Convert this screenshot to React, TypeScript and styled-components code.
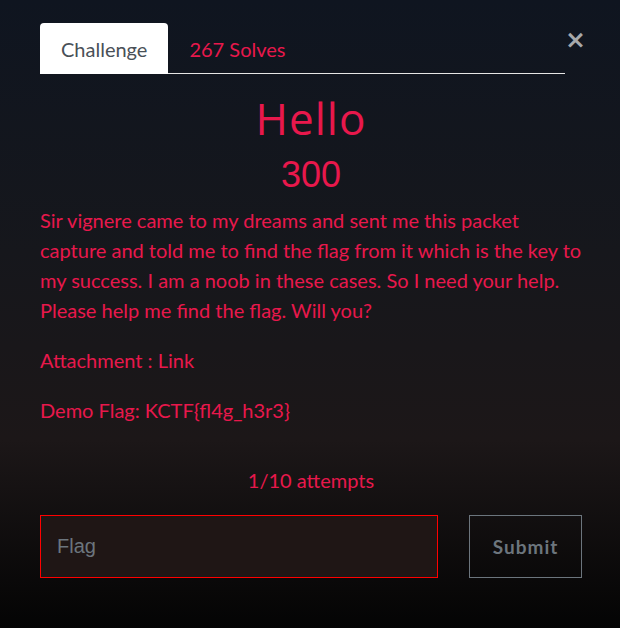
import React from "react";
import styled, { createGlobalStyle } from "styled-components";

const accent = "#e8184c";

const GlobalStyle = createGlobalStyle`
	html, body {
		margin: 0;
		padding: 0;
	}
	body {
		min-height: 628px;
		background: linear-gradient(to bottom, #0f1520 0%, #16171c 40%, #1c1718 70%, #040404 100%);
		font-family: Lato, "Open Sans", sans-serif;
	}
`;

const Modal = styled.div`
	width: 620px;
	min-height: 628px;
	box-sizing: border-box;
	padding: 23px 38px 0 40px;
`;

const Header = styled.div`
	display: flex;
	align-items: flex-start;
`;

const Tabs = styled.nav`
	flex: 1;
	display: flex;
	border-bottom: 1px solid #e6e6e6;
`;

const Tab = styled.div<{ $active?: boolean }>`
	height: 51px;
	display: flex;
	align-items: center;
	padding: 0 21px;
	font-size: 20px;
	border-radius: 4px 4px 0 0;
	color: ${(p) => (p.$active ? "#495057" : accent)};
	background: ${(p) => (p.$active ? "#ffffff" : "transparent")};
	margin-bottom: -1px;
`;

const Close = styled.button`
	width: 17px;
	margin-top: 4px;
	padding: 0;
	border: none;
	background: none;
	color: #a6a8ab;
	font-family: "DejaVu Sans", sans-serif;
	font-size: 25px;
	font-weight: bold;
	line-height: 1;
	cursor: pointer;
`;

const Title = styled.h2`
	margin: 20px 0 0;
	text-align: center;
	color: ${accent};
	font-family: "Open Sans", sans-serif;
	font-weight: 400;
	font-size: 44px;
	letter-spacing: 1px;
	line-height: 48px;
`;

const Points = styled.h3`
	margin: 13px 0 0;
	text-align: center;
	color: ${accent};
	font-family: "Liberation Sans", Arial, sans-serif;
	font-weight: 400;
	font-size: 36px;
	line-height: 40px;
`;

const Description = styled.div`
	margin-top: 10px;
	color: ${accent};
	font-size: 20px;
	line-height: 30px;

	p {
		margin: 0 0 20px;
	}

	p:last-child {
		margin-bottom: 0;
	}
`;

const Attempts = styled.p`
	margin: 43px 0 0;
	text-align: center;
	color: ${accent};
	font-size: 20px;
	line-height: 24px;
`;

const SubmitRow = styled.form`
	display: flex;
	gap: 31px;
	margin-top: 23px;
`;

const FlagInput = styled.input`
	flex: 0 0 398px;
	height: 63px;
	box-sizing: border-box;
	padding: 0 16px;
	border: 1px solid #ff0000;
	border-radius: 0;
	background: #1f1615;
	color: #ccc;
	font-family: "Liberation Sans", Arial, sans-serif;
	font-size: 20px;
	outline: none;

	&::placeholder {
		color: #6c757d;
	}
`;

const SubmitButton = styled.button`
	width: 115px;
	height: 63px;
	box-sizing: border-box;
	border: 1px solid #6c757d;
	border-radius: 0;
	background: transparent;
	color: #6c757d;
	font-family: Lato, sans-serif;
	font-weight: bold;
	font-size: 19px;
	letter-spacing: 1px;
`;

export default function App() {
	return (
		<>
			<GlobalStyle />
			<Modal>
				<Header>
					<Tabs>
						<Tab $active>Challenge</Tab>
						<Tab>267 Solves</Tab>
					</Tabs>
					<Close aria-label="Close">×</Close>
				</Header>
				<Title>Hello</Title>
				<Points>300</Points>
				<Description>
					<p>
						Sir vignere came to my dreams and sent me this packet capture and told me to find the flag from it which is the key to my success. I am a noob in these cases. So I need your help. Please help me find the flag. Will you?
					</p>
					<p>Attachment : Link</p>
					<p>Demo Flag: KCTF{"{"}fl4g_h3r3{"}"}</p>
				</Description>
				<Attempts>1/10 attempts</Attempts>
				<SubmitRow onSubmit={(e) => e.preventDefault()}>
					<FlagInput placeholder="Flag" />
					<SubmitButton type="submit">Submit</SubmitButton>
				</SubmitRow>
			</Modal>
		</>
	);
}
